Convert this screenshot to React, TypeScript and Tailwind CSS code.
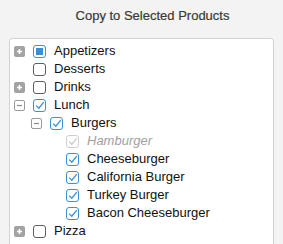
import * as React from "react";

type Check = "none" | "checked" | "partial" | "disabled";

type Row = {
  label: string;
  level: number;
  expander?: "plus" | "minus";
  check: Check;
};

const ROWS: Row[] = [
  { label: "Appetizers", level: 0, expander: "plus", check: "partial" },
  { label: "Desserts", level: 0, check: "none" },
  { label: "Drinks", level: 0, expander: "plus", check: "none" },
  { label: "Lunch", level: 0, expander: "minus", check: "checked" },
  { label: "Burgers", level: 1, expander: "minus", check: "checked" },
  { label: "Hamburger", level: 2, check: "disabled" },
  { label: "Cheeseburger", level: 2, check: "checked" },
  { label: "California Burger", level: 2, check: "checked" },
  { label: "Turkey Burger", level: 2, check: "checked" },
  { label: "Bacon Cheeseburger", level: 2, check: "checked" },
  { label: "Pizza", level: 0, expander: "plus", check: "none" },
];

const INDENT = ["pl-[4px]", "pl-[21px]", "pl-[37px]"];

function Expander({ kind }: { kind?: "plus" | "minus" }) {
  if (!kind) return <span className="h-[11px] w-[11px] shrink-0" />;
  if (kind === "plus") {
    return (
      <span className="flex h-[11px] w-[11px] shrink-0 items-center justify-center rounded-[2px] bg-[#a3a3a3]">
        <svg width="7" height="7" viewBox="0 0 7 7">
          <path d="M3.5 1v5M1 3.5h5" stroke="#fff" strokeWidth="1.6" />
        </svg>
      </span>
    );
  }
  return (
    <span className="flex h-[11px] w-[11px] shrink-0 items-center justify-center rounded-[2px] border border-[#9a9a9a] bg-white">
      <svg width="7" height="7" viewBox="0 0 7 7">
        <path d="M1 3.5h5" stroke="#8a8a8a" strokeWidth="1.2" />
      </svg>
    </span>
  );
}

function Box({ check }: { check: Check }) {
  const border =
    check === "none"
      ? "border-[#5e5e5e]"
      : check === "disabled"
        ? "border-[#cfcfcf]"
        : "border-[#3d8fd6]";
  return (
    <span
      className={`flex h-[13px] w-[13px] shrink-0 items-center justify-center rounded-[3px] border bg-white ${border}`}
    >
      {check === "partial" && <span className="h-[7px] w-[7px] bg-[#3a8fd4]" />}
      {(check === "checked" || check === "disabled") && (
        <svg width="10" height="9" viewBox="0 0 10 9">
          <path
            d="M1.2 4.6 3.8 7.2 8.8 1.2"
            fill="none"
            stroke={check === "checked" ? "#3a8fd4" : "#cccccc"}
            strokeWidth="1.3"
          />
        </svg>
      )}
    </span>
  );
}

export default function App() {
  return (
    <div className="h-[244px] w-[283px] overflow-hidden bg-[#f3f3f3] font-['Liberation_Sans',Arial,sans-serif]">
      <div className="pl-[22px] pt-[8px] text-center text-[13px] leading-[16px] text-[#3a3a3a] [-webkit-text-stroke:0.2px_#3a3a3a]">
        Copy to Selected Products
      </div>
      <div className="mx-[9px] mt-[14px] h-[220px] rounded-[3px] border border-[#d2d2d2] bg-white pt-[3px]">
        {ROWS.map((row) => (
          <div
            key={row.label}
            className={`flex h-[18px] items-center ${INDENT[row.level]}`}
          >
            <Expander kind={row.expander} />
            <span className="ml-[8px]">
              <Box check={row.check} />
            </span>
            <span
              className={`ml-[8px] whitespace-nowrap text-[13px] leading-[18px] ${
                row.check === "disabled" ? "italic text-[#a0a0a0]" : "text-[#111]"
              }`}
            >
              {row.label}
            </span>
          </div>
        ))}
      </div>
    </div>
  );
}
